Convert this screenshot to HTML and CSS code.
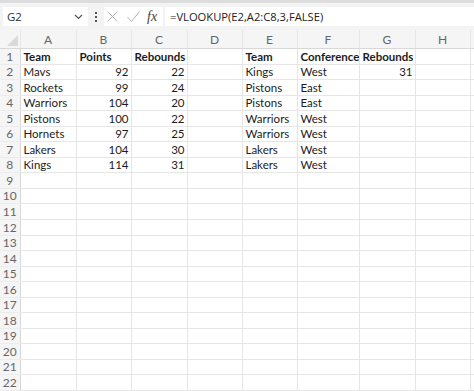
FILE: index.html
```html
<!DOCTYPE html>
<html lang="en">
<head>
    <meta charset="UTF-8">
    <title>VLOOKUP</title>
    <link rel="stylesheet" href="styles.css">
</head>
<body>
    <div class="topband"></div>
    <div class="toolbar">
        <div class="namebox">
            <span>G2</span>
            <svg class="chev" width="9" height="6" viewBox="0 0 9 6"><path d="M1 1 L4.5 4.5 L8 1" fill="none" stroke="#555" stroke-width="1.2"/></svg>
        </div>
        <div class="dots"><i></i><i></i><i></i></div>
        <div class="actions">
            <svg width="11" height="11" viewBox="0 0 11 11"><path d="M0.5 0.5 L10.5 10.5 M10.5 0.5 L0.5 10.5" stroke="#b5b5b5" stroke-width="1"/></svg>
            <svg width="13" height="11" viewBox="0 0 13 11"><path d="M0.5 6 L4.5 10.5 L12.5 0.5" fill="none" stroke="#b5b5b5" stroke-width="1"/></svg>
            <span class="fx">fx</span>
        </div>
        <div class="formula">=VLOOKUP(E2,A2:C8,3,FALSE)</div>
    </div>

    <table class="sheet">
        <colgroup>
            <col class="c-num"><col class="c-a"><col class="c-b"><col class="c-c"><col class="c-d">
            <col class="c-e"><col class="c-f"><col class="c-g"><col class="c-h"><col class="c-i">
        </colgroup>
        <thead>
            <tr>
                <th class="corner"><span class="tri"></span></th>
                <th>A</th><th>B</th><th>C</th><th>D</th><th>E</th><th>F</th><th>G</th><th>H</th><th></th>
            </tr>
        </thead>
        <tbody>
            <tr><th>1</th><td class="b">Team</td><td class="b">Points</td><td class="b">Rebounds</td><td></td><td class="b">Team</td><td class="b">Conference</td><td class="b">Rebounds</td><td></td><td></td></tr>
            <tr><th>2</th><td>Mavs</td><td class="n">92</td><td class="n">22</td><td></td><td>Kings</td><td>West</td><td class="n">31</td><td></td><td></td></tr>
            <tr><th>3</th><td>Rockets</td><td class="n">99</td><td class="n">24</td><td></td><td>Pistons</td><td>East</td><td></td><td></td><td></td></tr>
            <tr><th>4</th><td>Warriors</td><td class="n">104</td><td class="n">20</td><td></td><td>Pistons</td><td>East</td><td></td><td></td><td></td></tr>
            <tr><th>5</th><td>Pistons</td><td class="n">100</td><td class="n">22</td><td></td><td>Warriors</td><td>West</td><td></td><td></td><td></td></tr>
            <tr><th>6</th><td>Hornets</td><td class="n">97</td><td class="n">25</td><td></td><td>Warriors</td><td>West</td><td></td><td></td><td></td></tr>
            <tr><th>7</th><td>Lakers</td><td class="n">104</td><td class="n">30</td><td></td><td>Lakers</td><td>West</td><td></td><td></td><td></td></tr>
            <tr><th>8</th><td>Kings</td><td class="n">114</td><td class="n">31</td><td></td><td>Lakers</td><td>West</td><td></td><td></td><td></td></tr>
            <tr><th>9</th><td></td><td></td><td></td><td></td><td></td><td></td><td></td><td></td><td></td></tr>
            <tr><th>10</th><td></td><td></td><td></td><td></td><td></td><td></td><td></td><td></td><td></td></tr>
            <tr><th>11</th><td></td><td></td><td></td><td></td><td></td><td></td><td></td><td></td><td></td></tr>
            <tr><th>12</th><td></td><td></td><td></td><td></td><td></td><td></td><td></td><td></td><td></td></tr>
            <tr><th>13</th><td></td><td></td><td></td><td></td><td></td><td></td><td></td><td></td><td></td></tr>
            <tr><th>14</th><td></td><td></td><td></td><td></td><td></td><td></td><td></td><td></td><td></td></tr>
            <tr><th>15</th><td></td><td></td><td></td><td></td><td></td><td></td><td></td><td></td><td></td></tr>
            <tr><th>16</th><td></td><td></td><td></td><td></td><td></td><td></td><td></td><td></td><td></td></tr>
            <tr><th>17</th><td></td><td></td><td></td><td></td><td></td><td></td><td></td><td></td><td></td></tr>
            <tr><th>18</th><td></td><td></td><td></td><td></td><td></td><td></td><td></td><td></td><td></td></tr>
            <tr><th>19</th><td></td><td></td><td></td><td></td><td></td><td></td><td></td><td></td><td></td></tr>
            <tr><th>20</th><td></td><td></td><td></td><td></td><td></td><td></td><td></td><td></td><td></td></tr>
            <tr><th>21</th><td></td><td></td><td></td><td></td><td></td><td></td><td></td><td></td><td></td></tr>
            <tr><th>22</th><td></td><td></td><td></td><td></td><td></td><td></td><td></td><td></td><td></td></tr>
        </tbody>
    </table>
</body>
</html>
```

FILE: styles.css
```css
body {
    margin: 0;
    background: #fff;
    font-family: "Lato", "Liberation Sans", sans-serif;
    color: #1c1c1c;
    overflow: hidden;
}
.topband {
    height: 3px;
    background: #dcdcdc;
}
.toolbar {
    display: flex;
    align-items: center;
    height: 27px;
    background: #f3f3f3;
    padding: 0 0 0 3px;
}
.namebox {
    display: flex;
    align-items: center;
    justify-content: space-between;
    width: 85px;
    height: 19px;
    background: #fff;
    padding: 0 5px 0 4px;
    box-sizing: border-box;
    font-family: "Open Sans", sans-serif;
    font-size: 11.5px;
    color: #333;
}
.dots {
    display: flex;
    flex-direction: column;
    gap: 2px;
    width: 16px;
    align-items: center;
}
.dots i {
    width: 2px;
    height: 2px;
    background: #555;
    display: block;
}
.actions {
    display: flex;
    align-items: center;
    height: 19px;
    background: #fff;
    padding: 0 4px 0 3px;
    width: 59px;
    box-sizing: border-box;
}
.actions svg:first-child {
    margin-right: 9px;
}
.actions svg + svg {
    margin-right: 7px;
}
.fx {
    font-family: "Liberation Serif", serif;
    font-style: italic;
    font-size: 14px;
    color: #444;
}
.formula {
    flex: 1;
    height: 19px;
    line-height: 19px;
    background: #fff;
    margin-left: 2px;
    padding-left: 5px;
    font-family: "Open Sans", sans-serif;
    font-size: 11.2px;
    color: #222;
}
.sheet {
    border-collapse: collapse;
    table-layout: fixed;
    width: 490px;
    font-size: 11.5px;
}
.c-num { width: 20px; }
.c-a { width: 56px; }
.c-b { width: 55px; }
.c-c { width: 56px; }
.c-d { width: 55px; }
.c-e { width: 55px; }
.c-f { width: 62px; }
.c-g { width: 56px; }
.c-h { width: 55px; }
.c-i { width: 20px; }
.sheet thead th {
    height: 18px;
    padding: 0;
    background: #f5f5f5;
    color: #666;
    font-weight: normal;
    font-size: 12px;
    border-right: 1px solid #e6e6e6;
    border-bottom: 1px solid #d8d8d8;
}
.corner {
    position: relative;
}
.tri {
    position: absolute;
    right: 2px;
    bottom: 2px;
    width: 0;
    height: 0;
    border-left: 11px solid transparent;
    border-bottom: 11px solid #dadada;
}
.sheet tbody th,
.sheet td {
    height: 14.55px;
    padding: 0;
    line-height: 14px;
    vertical-align: bottom;
}
.sheet tbody th {
    background: #f5f5f5;
    color: #666;
    font-weight: normal;
    font-size: 12px;
    text-align: center;
    border-right: 1px solid #d8d8d8;
    border-bottom: 1px solid #ececec;
}
.sheet td {
    padding: 0 3px;
    white-space: nowrap;
    overflow: hidden;
    border-right: 1px solid #e6e6e6;
    border-bottom: 1px solid #e6e6e6;
}
.sheet td.b {
    font-weight: bold;
}
.sheet td.n {
    text-align: right;
    padding-right: 2px;
}
```
